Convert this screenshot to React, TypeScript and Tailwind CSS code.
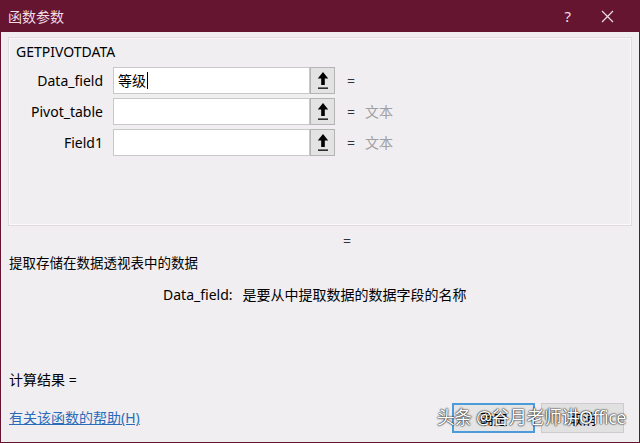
import React from "react";

const font = { fontFamily: '"Noto Sans", "Noto Sans CJK SC", sans-serif' };

function UpBtn() {
  return (
    <div className="w-[25px] h-[27px] border border-[#b4b4b4] bg-[#e3e3e3] flex items-center justify-center">
      <svg width="12" height="19" viewBox="0 0 12 19">
        <path d="M6 1 L0.8 7.5 H4.2 V14 H7.8 V7.5 H11.2 Z" fill="#000" />
        <rect x="1" y="16.5" width="10" height="1.3" fill="#000" />
      </svg>
    </div>
  );
}

function Row({ label, value, hint }: { label: string; value?: string; hint?: string }) {
  return (
    <div className="flex items-center h-[27px]">
      <div className="w-[104px] text-right text-[14px] text-black pr-[10px]">{label}</div>
      <div className="w-[197px] h-[27px] bg-white border border-[#c8c8c8] flex items-center pl-[4px] text-[14px] text-black">
        {value}
        {value && <span className="inline-block w-px h-[17px] bg-black ml-[1px]" />}
      </div>
      <UpBtn />
      <div className="ml-[12px] text-[14px] text-[#333]">=</div>
      {hint && <div className="ml-[10px] text-[14px] text-[#a0a0a0]">{hint}</div>}
    </div>
  );
}

export default function App() {
  return (
    <div className="w-[640px] h-[443px] flex flex-col bg-[#651530] text-black" style={font}>
      <div className="h-[32px] flex items-center justify-between text-[#f0dde4]">
        <div className="pl-[8px] text-[14px]">函数参数</div>
        <div className="flex items-center">
          <span className="text-[15px] mr-[30px]">?</span>
          <svg width="13" height="13" viewBox="0 0 13 13" className="mr-[26px]">
            <path d="M1 1 L12 12 M12 1 L1 12" stroke="#f0dde4" strokeWidth="1.2" />
          </svg>
        </div>
      </div>
      <div className="flex-1 mx-[1px] mb-[1px] bg-[#f1eef1] flex flex-col px-[7px] pt-[5px] relative">
        <div className="h-[189px] border border-[#e0dcdf] shadow-[inset_0_0_0_1px_#fbf8fa] pt-[4px]">
          <div className="pl-[7px] text-[14px] leading-[20px] mb-[5px]">GETPIVOTDATA</div>
          <div className="flex flex-col gap-[4px]">
            <Row label="Data_field" value="等级" />
            <Row label="Pivot_table" hint="文本" />
            <Row label="Field1" hint="文本" />
          </div>
        </div>
        <div className="text-[14px] leading-[20px] pl-[335px] mt-[5px] text-[#333]">=</div>
        <div className="text-[13.5px] leading-[20px] mt-[2px] pl-px">提取存储在数据透视表中的数据</div>
        <div className="text-[14px] leading-[20px] mt-[12px] pl-[155px] flex">
          <span>Data_field:</span>
          <span className="ml-[10px]">是要从中提取数据的数据字段的名称</span>
        </div>
        <div className="flex-1" />
        <div className="text-[14px] leading-[20px] pl-px mb-[13px]">计算结果 =</div>
        <div className="flex items-center justify-between mb-[9px]">
          <a className="text-[14px] text-[#2a6cb8] underline pl-px leading-[20px]">有关该函数的帮助(H)</a>
          <div className="flex gap-[6px] pr-[8px]">
            <div className="w-[83px] h-[30px] border-2 border-[#4d9bd8] bg-[#e5e5e5] flex items-center justify-center text-[14px]">确定</div>
            <div className="w-[83px] h-[30px] border border-[#cccccc] bg-[#e1e1e1] flex items-center justify-center text-[14px]">取消</div>
          </div>
        </div>
        <div className="absolute right-[13px] bottom-[11px] text-[18px] text-white [text-shadow:0_0_2px_#000,0_0_1px_#000] tracking-[-0.5px]">
          头条 @谷月老师讲Office
        </div>
      </div>
    </div>
  );
}
